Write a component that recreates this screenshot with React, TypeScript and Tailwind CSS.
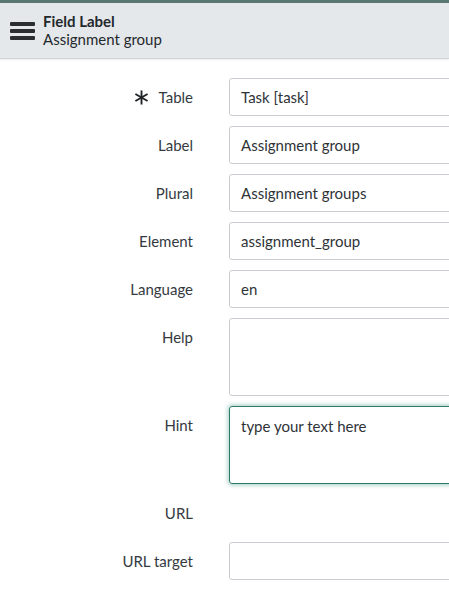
const font = { fontFamily: "Lato, 'Open Sans', sans-serif" };

function Asterisk() {
  return (
    <svg width="15" height="15" viewBox="0 0 16 16" className="mr-[10px] text-[#1f2326]">
      <g stroke="currentColor" strokeWidth="2" strokeLinecap="butt">
        <line x1="8" y1="0.5" x2="8" y2="15.5" />
        <line x1="1.5" y1="4.2" x2="14.5" y2="11.8" />
        <line x1="1.5" y1="11.8" x2="14.5" y2="4.2" />
      </g>
    </svg>
  );
}

type Row = { label: string; value?: string; kind: "input" | "textarea" | "none"; required?: boolean; focused?: boolean; placeholder?: string };

const rows: Row[] = [
  { label: "Table", value: "Task [task]", kind: "input", required: true },
  { label: "Label", value: "Assignment group", kind: "input" },
  { label: "Plural", value: "Assignment groups", kind: "input" },
  { label: "Element", value: "assignment_group", kind: "input" },
  { label: "Language", value: "en", kind: "input" },
  { label: "Help", kind: "textarea" },
  { label: "Hint", kind: "textarea", focused: true, placeholder: "type your text here" },
  { label: "URL", kind: "none" },
  { label: "URL target", kind: "input" },
];

export default function App() {
  return (
    <div className="w-[449px] h-[591px] overflow-hidden bg-white text-[#2e2e2e]" style={font}>
      <div className="border-t-[3px] border-[#5a7870] bg-[#e4e8eb] border-b border-b-[#cfd4d8] h-[59px] flex items-center shadow-[0_1px_2px_rgba(0,0,0,0.08)]">
        <div className="w-[43px] flex flex-col items-center gap-[3px] pl-[1px]">
          <span className="block w-[25px] h-[4px] bg-[#2b2d30] rounded-[1px]" />
          <span className="block w-[25px] h-[4px] bg-[#2b2d30] rounded-[1px]" />
          <span className="block w-[25px] h-[4px] bg-[#2b2d30] rounded-[1px]" />
        </div>
        <div className="flex flex-col leading-[18px] text-[15px] text-[#24292d] -mt-[1px]">
          <span className="font-bold">Field Label</span>
          <span>Assignment group</span>
        </div>
      </div>

      <div className="pt-[19px] flex flex-col gap-[10px]">
        {rows.map((r) => (
          <div key={r.label} className="flex">
            <div className="w-[193px] flex justify-end items-start pt-[9px] text-[15px] leading-[20px] text-[#343a3f] shrink-0">
              {r.required && <span className="mt-[3px]"><Asterisk /></span>}
              {r.label}
            </div>
            <div className="ml-[36px] shrink-0">
              {r.kind === "input" && (
                <div className="w-[260px] h-[38px] border border-[#c9cdd1] rounded-[3px] pl-[11px] flex items-center text-[15px] text-[#2e3338]">
                  {r.value}
                </div>
              )}
              {r.kind === "textarea" && (
                <div
                  className={
                    r.focused
                      ? "w-[260px] h-[78px] border border-[#2f7a6b] rounded-[3px] pl-[11px] pt-[9px] text-[15px] leading-[20px] text-[#2e3338] shadow-[0_0_4px_1px_rgba(47,140,120,0.45)]"
                      : "w-[260px] h-[78px] border border-[#c9cdd1] rounded-[3px] pl-[11px] pt-[9px] text-[15px] leading-[20px]"
                  }
                >
                  {r.placeholder}
                </div>
              )}
              {r.kind === "none" && <div className="h-[38px]" />}
            </div>
          </div>
        ))}
      </div>
    </div>
  );
}
